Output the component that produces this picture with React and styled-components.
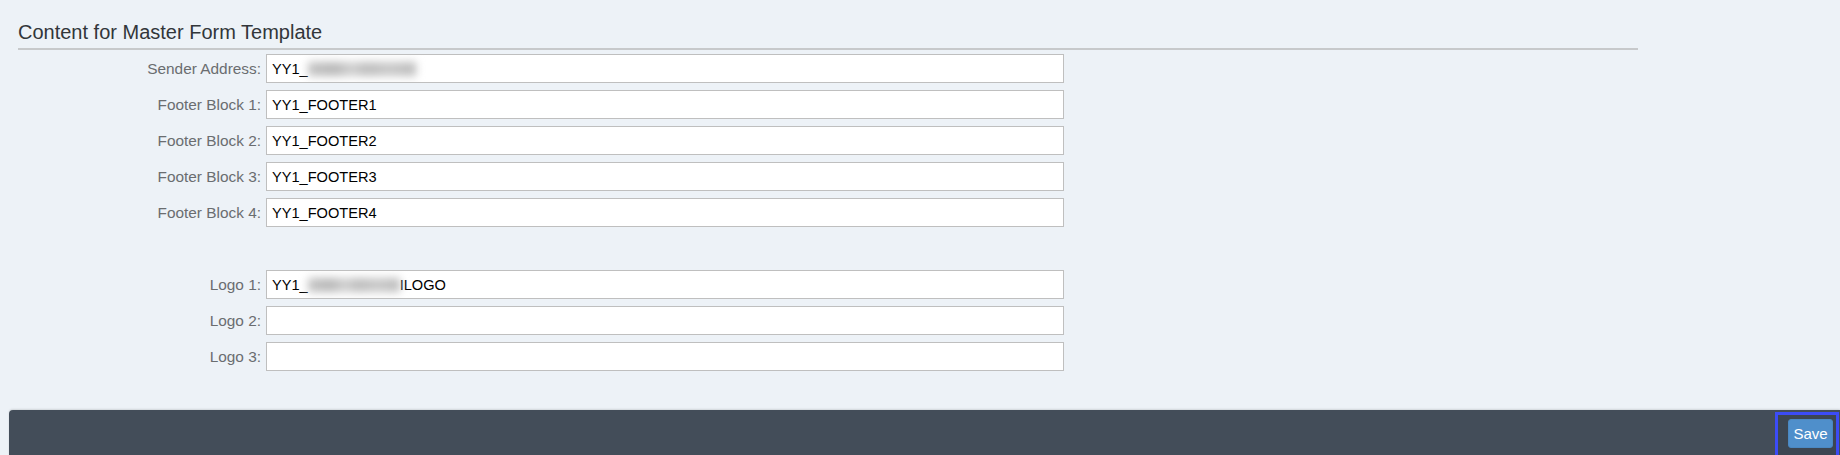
import React from 'react';
import styled, { createGlobalStyle } from 'styled-components';

const GlobalStyle = createGlobalStyle`
  html, body {
    margin: 0;
    padding: 0;
    background: #edf2f7;
    font-family: "Liberation Sans", Arial, sans-serif;
    overflow: hidden;
  }
`;

const fields = [
  { label: 'Sender Address:', prefix: 'YY1_', blurWidth: 108 },
  { label: 'Footer Block 1:', prefix: 'YY1_FOOTER1' },
  { label: 'Footer Block 2:', prefix: 'YY1_FOOTER2' },
  { label: 'Footer Block 3:', prefix: 'YY1_FOOTER3' },
  { label: 'Footer Block 4:', prefix: 'YY1_FOOTER4' },
  { spacer: true },
  { label: 'Logo 1:', prefix: 'YY1_', blurWidth: 92, suffix: 'ILOGO' },
  { label: 'Logo 2:' },
  { label: 'Logo 3:' },
];

const App = () => {
  return (
    <Page>
      <GlobalStyle />
      <Content>
        <Title>Content for Master Form Template</Title>
        <Form>
          {fields.map((f, i) =>
            f.spacer ? (
              <Spacer key={i} />
            ) : (
              <Row key={i}>
                <Label>{f.label}</Label>
                <Field>
                  {f.prefix}
                  {f.blurWidth && <Blurred $width={f.blurWidth} />}
                  {f.suffix}
                </Field>
              </Row>
            )
          )}
        </Form>
      </Content>
      <FooterBar>
        <FocusFrame>
          <SaveButton type="button">Save</SaveButton>
        </FocusFrame>
      </FooterBar>
    </Page>
  );
};

const Page = styled.div`
  width: 1840px;
  height: 455px;
  display: flex;
  flex-direction: column;
`;

const Content = styled.div`
  padding: 20px 0 0 18px;
`;

const Title = styled.h2`
  margin: 0;
  width: 1620px;
  font-size: 20px;
  line-height: 24px;
  font-weight: normal;
  color: #32363a;
  padding-bottom: 4px;
  border-bottom: 2px solid #c7c9cb;
`;

const Form = styled.div`
  display: flex;
  flex-direction: column;
  gap: 7px;
  margin-top: 4px;
`;

const Row = styled.div`
  display: grid;
  grid-template-columns: 243px 798px;
  column-gap: 5px;
  align-items: center;
  height: 29px;
`;

const Spacer = styled.div`
  height: 29px;
`;

const Label = styled.label`
  text-align: right;
  font-size: 15.4px;
  color: #6a6d70;
  white-space: nowrap;
`;

const Field = styled.div`
  box-sizing: border-box;
  height: 29px;
  background: #ffffff;
  border: 1px solid #bfbfbf;
  padding: 0 4px 0 5px;
  display: flex;
  align-items: center;
  font-size: 14.6px;
  color: #000000;
  white-space: nowrap;
  overflow: hidden;
`;

const Blurred = styled.span`
  display: inline-block;
  flex: none;
  width: ${(p) => p.$width}px;
  height: 14px;
  background: linear-gradient(
    90deg,
    #c4c4c4 0%,
    #b8b8b8 25%,
    #d0d0d0 40%,
    #bdbdbd 55%,
    #c9c9c9 75%,
    #bcbcbc 100%
  );
  filter: blur(4px);
`;

const FooterBar = styled.div`
  margin: 39px 0 0 9px;
  flex: 1;
  background: #434d59;
  border-radius: 4px 0 0 0;
  box-shadow: 0 -1px 2px rgba(0, 0, 0, 0.12);
  display: flex;
  justify-content: flex-end;
  align-items: flex-start;
  padding: 2px 1px 0 0;
`;

const FocusFrame = styled.div`
  box-sizing: border-box;
  width: 64px;
  height: 46px;
  border: 3px solid #3c4cf6;
  border-bottom: none;
  background: #3c4652;
  padding: 4px 3px 0 10px;
`;

const SaveButton = styled.button`
  width: 45px;
  height: 29px;
  border: 1px solid #4a88c2;
  border-radius: 3px;
  background: #4f8fcb;
  color: #ffffff;
  font-family: "Liberation Sans", Arial, sans-serif;
  font-size: 15px;
  padding: 0;
  cursor: pointer;
`;

export default App;
